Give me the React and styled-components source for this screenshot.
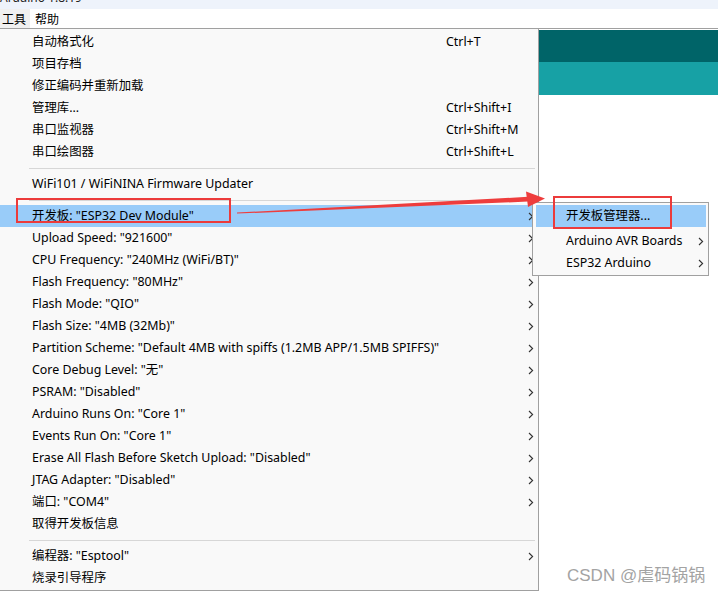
import React from 'react';
import styled, { createGlobalStyle } from 'styled-components';

const GlobalStyle = createGlobalStyle`
  html, body {
    margin: 0;
    padding: 0;
    background: #ffffff;
  }
  body {
    font-family: "Noto Sans", "Noto Sans CJK SC", sans-serif;
    font-size: 12.4px;
    color: #000;
  }
`;

const StyledWindow = styled.div`
  position: relative;
  width: 718px;
  height: 594px;
  overflow: hidden;
  background: #ffffff;
  display: flex;
  flex-direction: column;
`;

const TitleBar = styled.div`
  height: 9px;
  background: #eef3fb;
  overflow: hidden;
`;

const TitleText = styled.div`
  margin-top: -10px;
  line-height: 16px;
  font-size: 12px;
  color: #222;
`;

const MenuBar = styled.div`
  height: 19px;
  display: flex;
  align-items: stretch;
  background: #ffffff;
  border-bottom: 1px solid #a0a0a0;
`;

const MenuBarItem = styled.div`
  display: flex;
  align-items: center;
  font-size: 12px;
  padding: 0 ${({ $active }) => ($active ? '4px 0 2px' : '5px')};
  width: ${({ $active }) => ($active ? '30px' : 'auto')};
  box-sizing: border-box;
  background: ${({ $active }) => ($active ? '#f0f0f0' : 'transparent')};
`;

const IdeBody = styled.div`
  flex: 1;
  padding-top: 1px;
  display: flex;
  flex-direction: column;
`;

const Toolbar = styled.div`
  height: 32px;
  background: #006468;
`;

const TabBar = styled.div`
  height: 33px;
  background: #17a1a5;
`;

const Editor = styled.div`
  flex: 1;
  background: #ffffff;
`;

const DropMenu = styled.div`
  position: absolute;
  top: 29px;
  left: 0;
  width: 538px;
  padding: 2px 0 1px;
  background: #f9f9f9;
  border-right: 1px solid #a0a0a0;
  border-bottom: 1px solid #a0a0a0;
`;

const Row = styled.div`
  display: grid;
  grid-template-columns: 414px 80px 1fr;
  align-items: center;
  height: 22px;
  padding-left: 32px;
  margin: 0 2px 0 0;
  background: ${({ $selected }) => ($selected ? '#99ccf9' : 'transparent')};
  white-space: nowrap;
`;

const SubRow = styled(Row)`
  grid-template-columns: 130px 1fr;
  padding-left: 30px;
  margin: 0 2px 0 3px;
`;

const Label = styled.span`
  line-height: 22px;
`;

const Shortcut = styled.span`
  line-height: 22px;
`;

const ArrowCell = styled.span`
  display: flex;
  align-items: center;
  padding-left: 2px;
`;

const Separator = styled.div`
  height: 10px;
  display: flex;
  align-items: center;
  padding-left: 29px;
  padding-right: 3px;

  &::after {
    content: '';
    flex: 1;
    height: 1px;
    background: #d7d7d7;
  }
`;

const SubMenu = styled.div`
  position: absolute;
  top: 202px;
  left: 532px;
  width: 175px;
  padding: 2px 0 1px;
  background: #f9f9f9;
  border: 1px solid #a0a0a0;
`;

const SubGap = styled.div`
  height: 3px;
`;

const Annotation = styled.svg`
  position: absolute;
  left: 0;
  top: 0;
  pointer-events: none;
`;

const Watermark = styled.div`
  position: absolute;
  left: 567px;
  top: 564px;
  font-family: "Liberation Sans", "Noto Sans CJK SC", sans-serif;
  font-size: 17px;
  line-height: 24px;
  color: #a3a3a3;
`;

const Chevron = () => (
  <svg width="6" height="9" viewBox="0 0 6 9">
    <path d="M1 1 L4.6 4.5 L1 8" fill="none" stroke="#333" strokeWidth="1.1" />
  </svg>
);

const Item = ({ label, shortcut, sub, selected }) => (
  <Row $selected={selected}>
    <Label>{label}</Label>
    <Shortcut>{shortcut}</Shortcut>
    <ArrowCell>{sub && <Chevron />}</ArrowCell>
  </Row>
);

const groupA = [
  ['自动格式化', 'Ctrl+T'],
  ['项目存档'],
  ['修正编码并重新加载'],
  ['管理库...', 'Ctrl+Shift+I'],
  ['串口监视器', 'Ctrl+Shift+M'],
  ['串口绘图器', 'Ctrl+Shift+L'],
];

const boardGroup = [
  ['开发板: "ESP32 Dev Module"', true],
  ['Upload Speed: "921600"', true],
  ['CPU Frequency: "240MHz (WiFi/BT)"', true],
  ['Flash Frequency: "80MHz"', true],
  ['Flash Mode: "QIO"', true],
  ['Flash Size: "4MB (32Mb)"', true],
  ['Partition Scheme: "Default 4MB with spiffs (1.2MB APP/1.5MB SPIFFS)"', true],
  ['Core Debug Level: "无"', true],
  ['PSRAM: "Disabled"', true],
  ['Arduino Runs On: "Core 1"', true],
  ['Events Run On: "Core 1"', true],
  ['Erase All Flash Before Sketch Upload: "Disabled"', true],
  ['JTAG Adapter: "Disabled"', true],
  ['端口: "COM4"', true],
  ['取得开发板信息', false],
];

const App = () => (
  <>
    <GlobalStyle />
    <StyledWindow>
      <TitleBar>
        <TitleText>Arduino 1.8.19</TitleText>
      </TitleBar>
      <MenuBar>
        <MenuBarItem $active>工具</MenuBarItem>
        <MenuBarItem>帮助</MenuBarItem>
      </MenuBar>
      <IdeBody>
        <Toolbar />
        <TabBar />
        <Editor />
      </IdeBody>

      <DropMenu>
        {groupA.map(([label, shortcut]) => (
          <Item key={label} label={label} shortcut={shortcut} />
        ))}
        <Separator />
        <Item label="WiFi101 / WiFiNINA Firmware Updater" />
        <Separator />
        {boardGroup.map(([label, sub], i) => (
          <Item key={label} label={label} sub={sub} selected={i === 0} />
        ))}
        <Separator />
        <Item label='编程器: "Esptool"' sub />
        <Item label="烧录引导程序" />
      </DropMenu>

      <SubMenu>
        <SubRow $selected>
          <Label>开发板管理器...</Label>
          <ArrowCell />
        </SubRow>
        <SubGap />
        <SubRow>
          <Label>Arduino AVR Boards</Label>
          <ArrowCell>
            <Chevron />
          </ArrowCell>
        </SubRow>
        <SubRow>
          <Label>ESP32 Arduino</Label>
          <ArrowCell>
            <Chevron />
          </ArrowCell>
        </SubRow>
      </SubMenu>

      <Annotation width="718" height="594" viewBox="0 0 718 594">
        <rect x="17" y="199" width="213" height="23" fill="none" stroke="#ec3b3b" strokeWidth="2" />
        <rect x="554" y="197" width="117" height="31" fill="none" stroke="#ec3b3b" strokeWidth="2" />
        <polygon points="237,212.6 528,196.8 528,201.6 237,213.6" fill="#ee3d3d" />
        <polygon points="526,191.5 545,198.6 528,207" fill="#ee3d3d" />
      </Annotation>

      <Watermark>CSDN @虐码锅锅</Watermark>
    </StyledWindow>
  </>
);

export default App;
